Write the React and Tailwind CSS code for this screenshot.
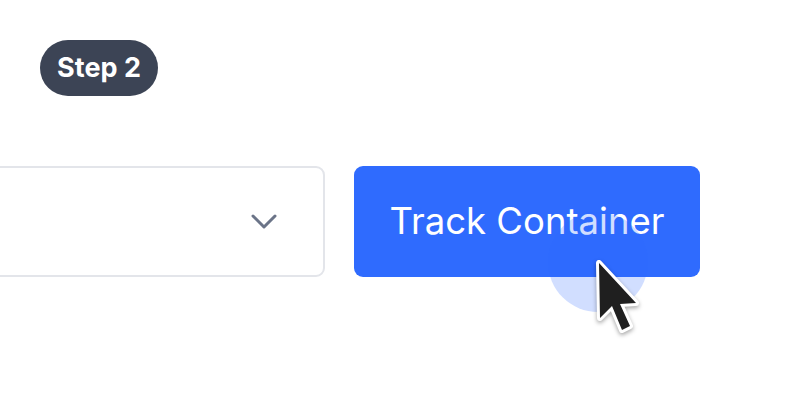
export default function App() {
  return (
    <div className="w-[800px] h-[400px] bg-white overflow-hidden relative" style={{ fontFamily: "Inter, 'Noto Sans', sans-serif" }}>
      <div className="pt-[40px] pl-[40px]">
        <div className="inline-flex items-center justify-center h-[56px] w-[118px] rounded-full bg-[#3c4455] text-white text-[27px] font-bold">
          Step 2
        </div>
      </div>
      <div className="flex mt-[70px]">
        <div className="ml-[-20px] w-[345px] h-[111px] border-2 border-[#e3e5ea] rounded-[9px] flex items-center justify-end pr-[46px]">
          <svg width="26" height="16" viewBox="0 0 26 16" fill="none">
            <path d="M2 2 L13 13 L24 2" stroke="#6b7488" strokeWidth="3" strokeLinecap="round" strokeLinejoin="round" />
          </svg>
        </div>
        <div className="relative ml-[29px]">
          <button className="w-[346px] h-[111px] rounded-[9px] bg-[#2f6bfe] text-white text-[36.5px] font-normal flex items-center justify-center">
            Track Container
          </button>
          <div className="absolute left-[194px] top-[46px] w-[100px] h-[100px] rounded-full bg-[#2f6bfe] opacity-[0.22] pointer-events-none" />
          <svg className="absolute left-[236px] top-[82px]" width="62" height="100" viewBox="0 0 62 100" style={{ filter: "drop-shadow(0 2px 2px rgba(0,0,0,0.35))" }}>
            <path d="M9 15 L10 70 L22 58 L32 82 L40 78 L30 56 L46 55 Z" fill="#1f1f1f" stroke="#ffffff" strokeWidth="6" strokeLinejoin="round" paintOrder="stroke" />
          </svg>
        </div>
      </div>
    </div>
  );
}
